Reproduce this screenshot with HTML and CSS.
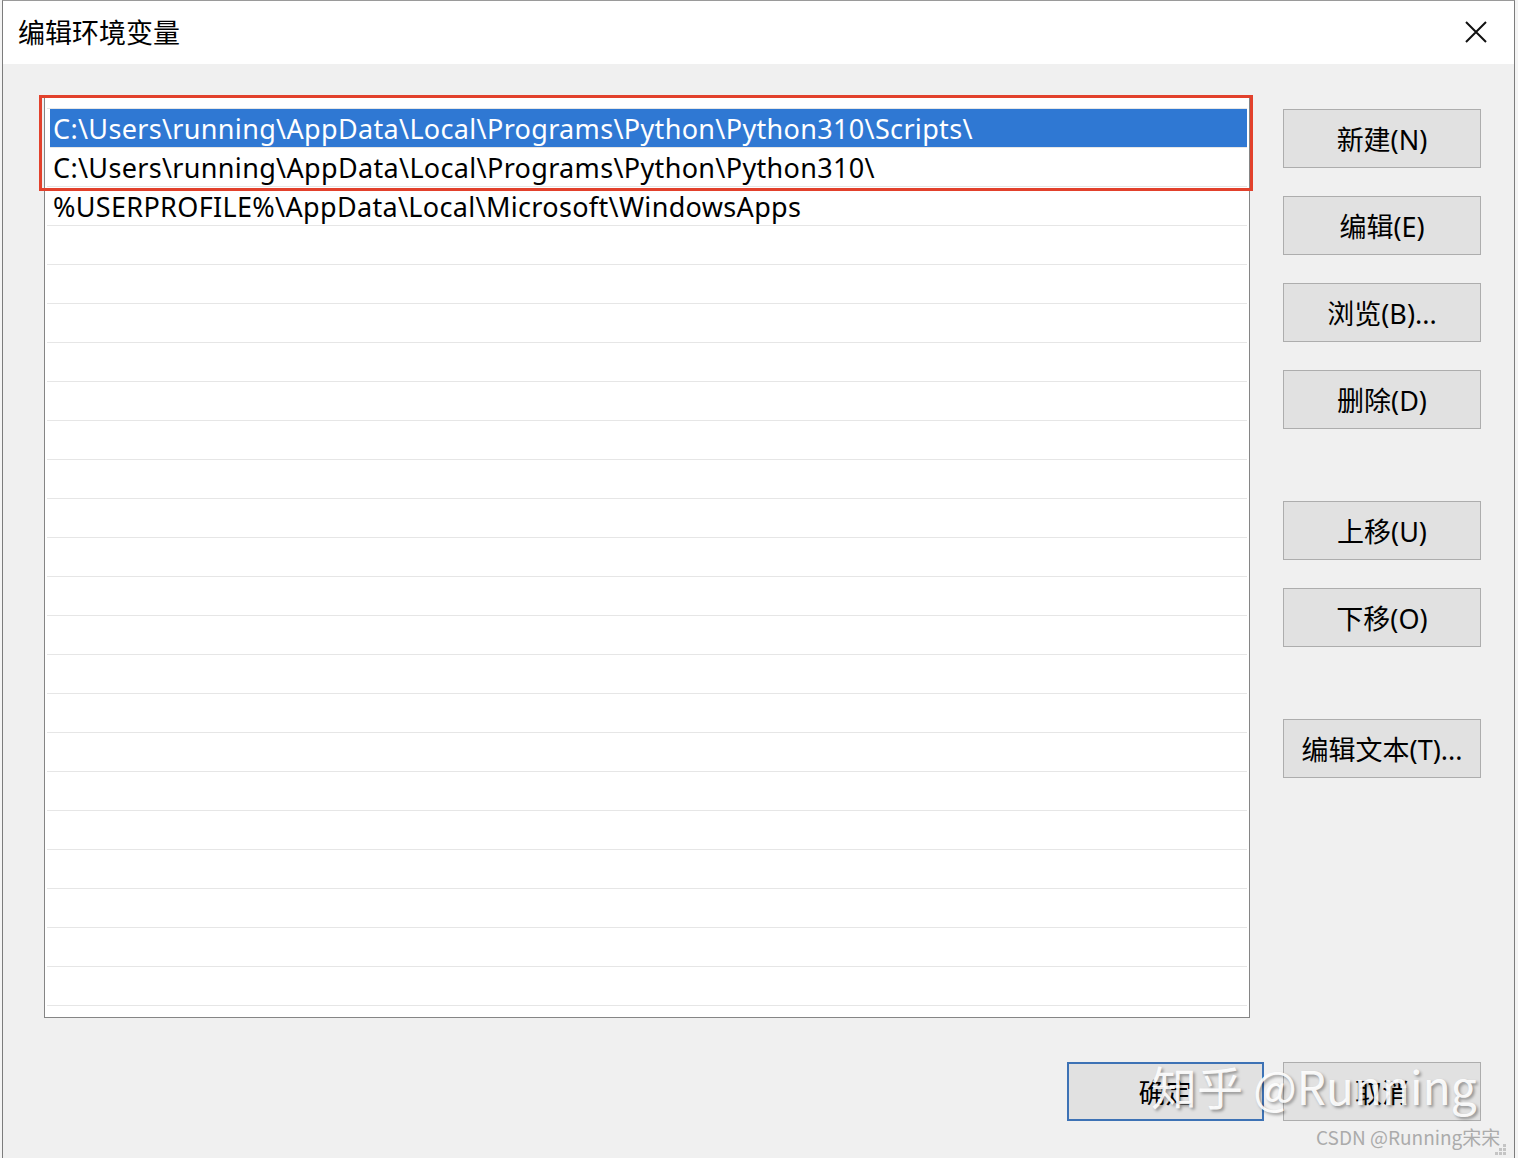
FILE: index.html
```html
<!DOCTYPE html>
<html lang="zh-CN">
  <head>
    <meta charset="UTF-8" />
    <meta name="viewport" content="width=device-width, initial-scale=1.0" />
    <title>编辑环境变量</title>
    <link rel="stylesheet" href="styles.css">
  </head>
  <body>
    <div class="window">
      <div class="titlebar">
        <span class="title">编辑环境变量</span>
        <svg class="close" width="22" height="22" viewBox="0 0 22 22">
          <path d="M1 1 L21 21 M21 1 L1 21" stroke="#111" stroke-width="2" fill="none" />
        </svg>
      </div>

      <div class="content">
        <div class="list-wrap">
          <div class="list">
            <div class="list-pad"></div>
            <div class="row selected">C:\Users\running\AppData\Local\Programs\Python\Python310\Scripts\</div>
            <div class="row">C:\Users\running\AppData\Local\Programs\Python\Python310\</div>
            <div class="row">%USERPROFILE%\AppData\Local\Microsoft\WindowsApps</div>
            <div class="row"></div>
            <div class="row"></div>
            <div class="row"></div>
            <div class="row"></div>
            <div class="row"></div>
            <div class="row"></div>
            <div class="row"></div>
            <div class="row"></div>
            <div class="row"></div>
            <div class="row"></div>
            <div class="row"></div>
            <div class="row"></div>
            <div class="row"></div>
            <div class="row"></div>
            <div class="row"></div>
            <div class="row"></div>
            <div class="row"></div>
            <div class="row"></div>
            <div class="row"></div>
            <div class="row"></div>
          </div>
          <!-- red highlight drawn over the first two rows -->
          <div class="highlight"></div>
        </div>

        <div class="side">
          <button class="btn">新建(N)</button>
          <button class="btn">编辑(E)</button>
          <button class="btn">浏览(B)...</button>
          <button class="btn">删除(D)</button>
          <button class="btn group">上移(U)</button>
          <button class="btn">下移(O)</button>
          <button class="btn group">编辑文本(T)...</button>
        </div>
      </div>

      <div class="footer">
        <button class="btn default">确定</button>
        <button class="btn">取消</button>
        <div class="watermark">知乎 @Running</div>
        <div class="credit">CSDN @Running宋宋</div>
        <svg class="grip" width="14" height="14" viewBox="0 0 14 14">
          <rect x="10" y="2" width="3" height="3" fill="#c4c4c4" />
          <rect x="6" y="6" width="3" height="3" fill="#c4c4c4" />
          <rect x="10" y="6" width="3" height="3" fill="#c4c4c4" />
          <rect x="2" y="10" width="3" height="3" fill="#c4c4c4" />
          <rect x="6" y="10" width="3" height="3" fill="#c4c4c4" />
          <rect x="10" y="10" width="3" height="3" fill="#c4c4c4" />
        </svg>
      </div>
    </div>
  </body>
</html>
```

FILE: styles.css
```css
/* Windows style "edit environment variable" dialog */
html,
body {
  margin: 0;
  background: #f4f4f4;
}

body {
  font-family: "Noto Sans", "Noto Sans CJK SC", sans-serif;
  color: #000;
  overflow: hidden;
}

.window {
  margin-left: 2px;
  width: 1511px;
  height: 1157px;
  border-left: 1px solid #7c7c7c;
  border-right: 1px solid #7c7c7c;
  border-top: 1px solid #9a9a9a;
  background: #f0f0f0;
  display: flex;
  flex-direction: column;
}

.titlebar {
  height: 63px;
  background: #fff;
  display: flex;
  align-items: center;
  justify-content: space-between;
  padding: 0 27px 0 15px;
}

.title {
  font-family: "Noto Sans CJK SC", sans-serif;
  font-size: 27px;
  margin-top: -2px;
}

.close {
  display: block;
  margin-top: -2px;
}

.content {
  display: flex;
  padding: 33px 33px 0 41px;
  gap: 33px;
}

.list-wrap {
  position: relative;
}

.list {
  width: 1204px;
  height: 919px;
  background: #fff;
  border: 1px solid #858585;
}

.list-pad {
  height: 10px;
  margin: 0 2px;
  border-bottom: 1px solid #e6e6e6;
}

.row {
  height: 39px;
  box-sizing: border-box;
  margin: 0 2px;
  padding-left: 6px;
  padding-top: 2px;
  border-bottom: 1px solid #e6e6e6;
  font-size: 27px;
  letter-spacing: 0.33px;
  line-height: 36px;
  white-space: nowrap;
}

.row.selected {
  background: #2f78d3;
  color: #fff;
  margin-left: 5px;
  padding-left: 3px;
}

.highlight {
  position: absolute;
  left: -5px;
  top: -2px;
  width: 1208px;
  height: 90px;
  border: 3px solid #e2412c;
}

.side {
  display: flex;
  flex-direction: column;
  padding-top: 12px;
}

.btn {
  width: 198px;
  height: 59px;
  box-sizing: border-box;
  background: #e1e1e1;
  border: 1px solid #adadad;
  font-family: "Noto Sans", "Noto Sans CJK SC", sans-serif;
  font-size: 27px;
  color: #000;
  padding: 0;
  margin-bottom: 28px;
}

.side .btn.group {
  margin-top: 44px;
}

.footer {
  position: relative;
  display: flex;
  justify-content: flex-end;
  gap: 19px;
  padding: 44px 33px 0 0;
}

.footer .btn {
  margin: 0;
}

.btn.default {
  width: 197px;
  border: 2px solid #3d72b5;
}

.watermark {
  position: absolute;
  left: 1148px;
  top: 34px;
  font-family: "Noto Sans CJK SC", sans-serif;
  font-size: 46px;
  color: rgba(255, 255, 255, 0.92);
  text-shadow: 2px 2px 3px rgba(0, 0, 0, 0.35);
  white-space: nowrap;
}

.credit {
  position: absolute;
  left: 1313px;
  top: 105px;
  font-family: "Noto Sans CJK SC", sans-serif;
  font-size: 19px;
  color: #ababab;
  white-space: nowrap;
}

.grip {
  position: absolute;
  left: 1490px;
  top: 124px;
}
```
